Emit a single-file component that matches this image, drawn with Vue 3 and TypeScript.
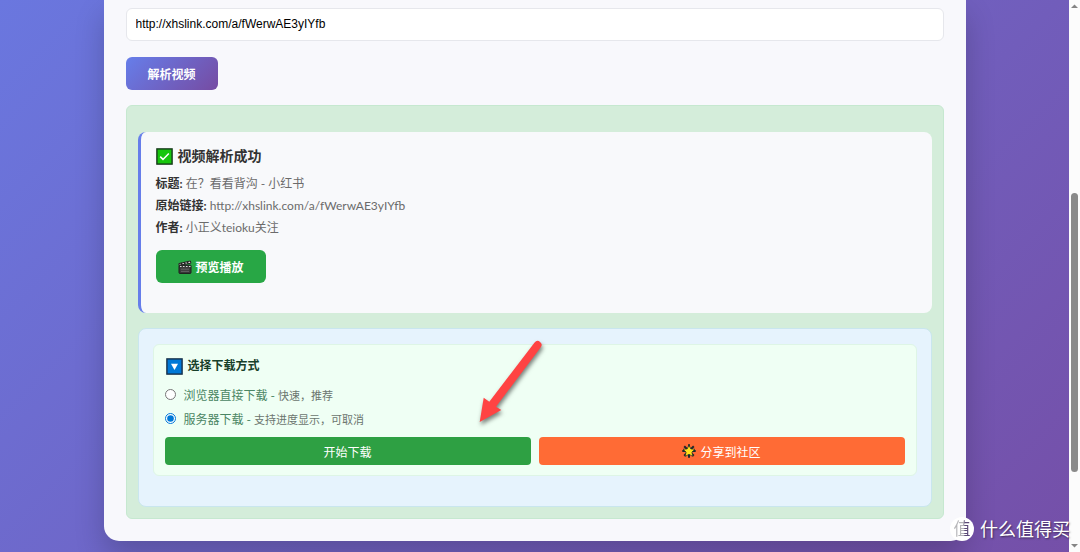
<script setup lang="ts">
import { ref } from 'vue'

interface InfoRow {
  label: string
  value: string
}

interface DownloadMode {
  id: string
  name: string
  note: string
}

const link = ref('http://xhslink.com/a/fWerwAE3yIYfb')
const mode = ref('server')

const info: InfoRow[] = [
  { label: '标题:', value: '在？看看背沟 - 小红书' },
  { label: '原始链接:', value: 'http://xhslink.com/a/fWerwAE3yIYfb' },
  { label: '作者:', value: '小正义teioku关注' },
]

const modes: DownloadMode[] = [
  { id: 'browser', name: '浏览器直接下载', note: '快速，推荐' },
  { id: 'server', name: '服务器下载', note: '支持进度显示，可取消' },
]
</script>

<template>
  <div class="shell">
    <main class="content">
      <div class="card">
        <form @submit.prevent>
          <input v-model="link" class="link" type="text" aria-label="视频链接" />
          <button class="btn parse" type="submit">解析视频</button>
        </form>

        <section class="result">
          <article class="info">
            <h3 class="info-title">
              <svg class="badge" viewBox="0 0 17 17" aria-hidden="true">
                <rect x="0.9" y="0.9" width="15.2" height="15.2" fill="#16c60c" stroke="#173a1b" stroke-width="1.4" />
                <path d="M4.2 8.6 7 11.4 12.8 5.4" fill="none" stroke="#fff" stroke-width="1.5" />
              </svg>
              视频解析成功
            </h3>
            <p v-for="row in info" :key="row.label" class="row">
              <strong>{{ row.label }}</strong> {{ row.value }}
            </p>
            <button class="btn preview" type="button">
              <svg class="glyph" viewBox="0 0 14 14" aria-hidden="true">
                <path d="M.8 3.6 12.4 1 12.9 3.2 1.2 5.4Z" fill="#e8e8e8" stroke="#222" stroke-width="1" />
                <path d="m3 3 1.3 1.7M6 2.3l1.3 1.8M9 1.7l1.3 1.9" stroke="#222" stroke-width="1.5" />
                <rect x="1" y="5.2" width="12" height="8.2" rx=".7" fill="#3b3b3b" stroke="#1d1d1d" />
                <path d="M2 6.5h10.5" stroke="#ddd" stroke-width="1" stroke-dasharray="1.5 1.5" />
                <path d="M3 9.2h8M3 11.4h8" stroke="#686868" stroke-width=".9" />
              </svg>
              预览播放
            </button>
          </article>

          <div class="download">
            <div class="options" role="radiogroup" aria-labelledby="options-title">
              <h4 id="options-title" class="options-title">
                <svg class="badge" viewBox="0 0 17 17" aria-hidden="true">
                  <rect x="0.9" y="0.9" width="15.2" height="15.2" fill="#0078d7" stroke="#17304a" stroke-width="1.4" />
                  <path d="M5 5.8h7L8.5 12Z" fill="#fff" />
                </svg>
                选择下载方式
              </h4>
              <label v-for="m in modes" :key="m.id" class="option">
                <input v-model="mode" type="radio" name="mode" :value="m.id" />
                <span>{{ m.name }} - <small>{{ m.note }}</small></span>
              </label>
              <div class="actions">
                <button class="action start" type="button">开始下载</button>
                <button class="action share" type="button">
                  <svg class="glyph" viewBox="0 0 14 14" aria-hidden="true">
                    <path d="M7 .3v13.4M.3 7h13.4M2.2 2.2l9.6 9.6M11.8 2.2l-9.6 9.6" stroke="#1f2a2a" stroke-width="2" />
                    <path d="m7 1.2 1.8 3.7 4.2.4-3.1 2.8.9 4.3L7 10.3l-3.8 2.1.9-4.3L1 5.3l4.2-.4Z" fill="#ffe01b" stroke="#1f2a2a" stroke-width=".7" />
                  </svg>
                  分享到社区
                </button>
              </div>
              <svg class="pointer" viewBox="0 0 80 100" aria-hidden="true">
                <path d="M66.6 7.4A3.9 3.9 0 0 1 72.6 12.4L28 71.7 33.3 75 11.7 87 15.7 62.7 21.3 66.7Z" fill="#ff4343" />
              </svg>
            </div>
          </div>
        </section>
      </div>
    </main>

    <div class="scrollbar" aria-hidden="true">
      <svg viewBox="0 0 11 11"><path d="M2 8h7L5.5 4.5Z" fill="#858585" /></svg>
      <div class="track"><div class="thumb"></div></div>
      <svg viewBox="0 0 11 11"><path d="M2 3h7L5.5 6.5Z" fill="#858585" /></svg>
    </div>

    <div class="watermark">
      <span class="seal"><span>值</span></span>
      <span>什么值得买</span>
    </div>
  </div>
</template>

<style>
body {
  margin: 0;
}
</style>

<style scoped>
* {
  box-sizing: border-box;
}

.shell {
  position: relative;
  display: flex;
  min-height: 100vh;
  overflow: hidden;
  font-family: Lato, "Noto Sans CJK SC", sans-serif;
  font-size: 12px;
  color: #333;
  background: linear-gradient(135deg, #6a77df 0%, #764ba2 110%);
}

.content {
  flex: 1;
  min-width: 0;
  padding: 0 16px 11px;
}

.card {
  max-width: 862px;
  margin: 0 auto;
  padding: 8px 22px 22px;
  border-radius: 0 0 15px 15px;
  background: #f8f8fc;
  box-shadow: 0 15px 30px rgba(0, 0, 0, 0.2);
}

.link {
  display: block;
  width: 100%;
  height: 33px;
  padding: 0 9px 2px;
  border: 1px solid #e6e7ec;
  border-radius: 6px;
  background: #fff;
  color: #000;
  font-family: "Liberation Sans", sans-serif;
  font-size: 12px;
}

.btn {
  display: inline-flex;
  align-items: center;
  justify-content: center;
  gap: 4px;
  height: 33px;
  padding: 0 22px;
  border: 0;
  border-radius: 6px;
  color: #fff;
  font-family: inherit;
  font-size: 12px;
  font-weight: 700;
}

.parse {
  display: flex;
  margin: 16px 0 15px;
  background: linear-gradient(135deg, #667eea, #764ba2);
}

.result {
  display: flex;
  flex-direction: column;
  gap: 15px;
  padding: 26px 11px 11px;
  border: 1px solid #c6e8d0;
  border-radius: 6px;
  background: #d4edda;
}

.info {
  padding: 15px 15px 30px;
  border-left: 3px solid #667eea;
  border-radius: 8px;
  background: #f8f9fb;
}

.info-title,
.options-title {
  display: flex;
  align-items: center;
  gap: 5px;
  margin: 0;
}

.info-title {
  margin-bottom: 8px;
  font-size: 14px;
  line-height: 18px;
}

.badge {
  width: 17px;
  height: 17px;
}

.glyph {
  width: 14px;
  height: 14px;
}

.row {
  margin: 0;
  line-height: 22px;
  color: #6b6b6b;
}

.row strong {
  color: #333;
}

.preview {
  margin-top: 11px;
  background: #28a745;
}

.download {
  padding: 15px 14px 30px;
  border: 1px solid #c9e6ee;
  border-radius: 8px;
  background: #e6f3fd;
}

.options {
  position: relative;
  padding: 10px 11px;
  border: 1px solid #def5e6;
  border-radius: 6px;
  background: #effff4;
}

.options-title {
  margin-bottom: 5px;
  padding-left: 1px;
  font-size: 12px;
  line-height: 22px;
  color: #17402a;
}

.option {
  display: flex;
  align-items: center;
  gap: 8px;
  height: 24px;
  color: #4a8563;
}

.option input {
  width: 11px;
  height: 11px;
  margin: 0;
  accent-color: #0078d7;
}

.option small {
  font-size: 11px;
  color: #6b756e;
}

.actions {
  display: grid;
  grid-template-columns: 1fr 1fr;
  gap: 8px;
  margin-top: 7px;
}

.action {
  display: flex;
  align-items: center;
  justify-content: center;
  gap: 4px;
  height: 28px;
  padding: 0;
  border: 0;
  border-radius: 4px;
  color: #fff;
  font-family: inherit;
  font-size: 12px;
}

.start {
  background: #2ea043;
}

.share {
  background: #ff6b35;
}

.pointer {
  position: absolute;
  top: -10px;
  left: 314px;
  width: 80px;
  height: 100px;
  filter: drop-shadow(1px 3px 2px rgba(0, 0, 0, 0.5));
  pointer-events: none;
}

.scrollbar {
  display: flex;
  flex-direction: column;
  width: 11px;
  background: #fcfcfc;
}

.scrollbar svg {
  width: 11px;
  height: 11px;
}

.track {
  display: flex;
  flex: 1;
  flex-direction: column;
  align-items: center;
  padding-top: 182px;
}

.thumb {
  width: 7px;
  height: 279px;
  border-radius: 4px;
  background: #8a8a8a;
}

.watermark {
  position: absolute;
  right: 10px;
  bottom: 11px;
  display: flex;
  align-items: center;
  gap: 6px;
  height: 24px;
  color: #fff;
  font-size: 18px;
  line-height: 24px;
  white-space: nowrap;
  text-shadow: 1px 1px 2px rgba(0, 0, 0, 0.5);
}

.seal {
  display: grid;
  place-items: center;
  width: 24px;
  height: 24px;
  border-radius: 50%;
  background: #fff;
  font-size: 17px;
  text-shadow: none;
}

.seal span {
  background: linear-gradient(90deg, #b5b5b8 55%, #5c4a78 65%);
  background-clip: text;
  color: transparent;
}
</style>
